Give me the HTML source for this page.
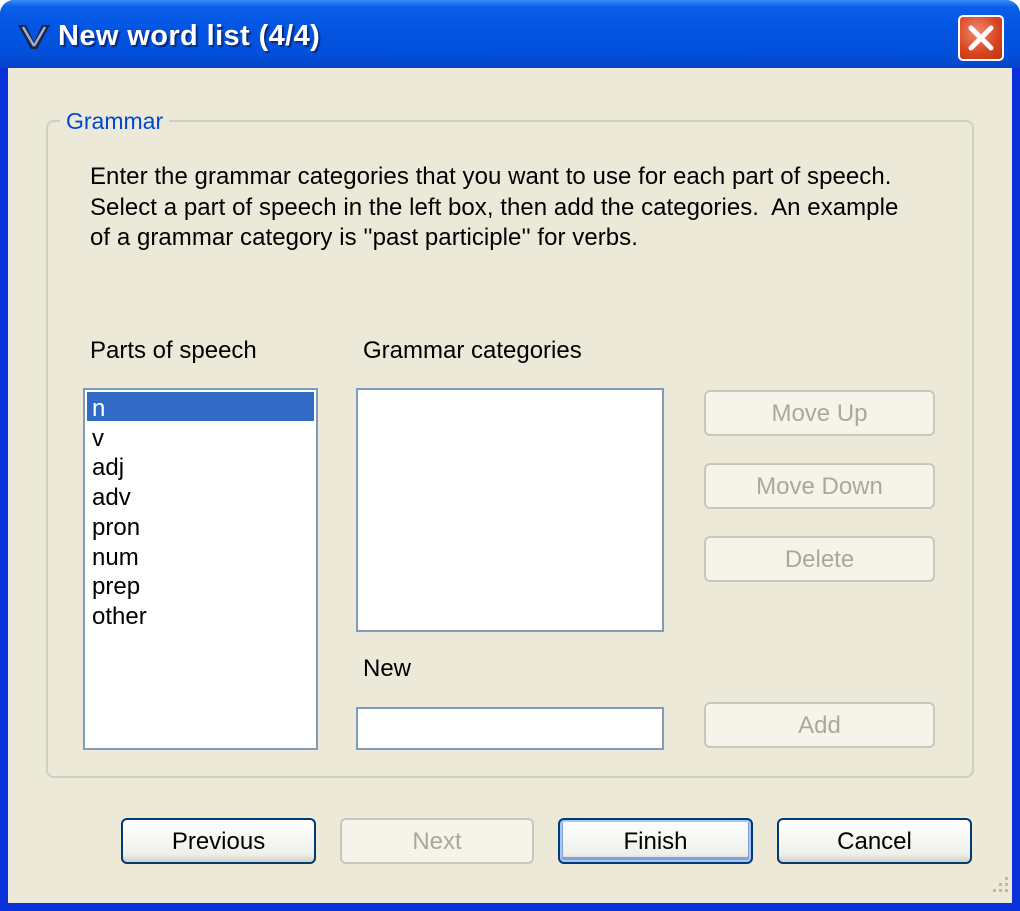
<!DOCTYPE html>
<html><head><style>
*{margin:0;padding:0;box-sizing:border-box}
body{width:1020px;height:911px;overflow:hidden;background:#fff;font-family:"Liberation Sans",sans-serif;font-size:24px;color:#000}
.win{position:absolute;left:0;top:0;width:1020px;height:911px;background:#0831D9;border-radius:14px 14px 0 0;overflow:hidden}
.title{position:absolute;left:0;top:0;width:1020px;height:68px;background:linear-gradient(#3A8CF8 0%,#0A5FE8 10%,#0355E3 40%,#0250DA 80%,#0344C8 100%)}
.ttext{position:absolute;left:58px;top:20px;color:#fff;font-weight:bold;font-size:29px;letter-spacing:0.4px;text-shadow:2px 2px 1px #0A2A80}
.close{position:absolute;left:958px;top:15px;width:46px;height:46px;border:2px solid #fff;border-radius:5px;background:radial-gradient(circle at 40% 35%,#EF8A6E,#D8431E 60%,#C03310)}
.client{position:absolute;left:8px;top:68px;width:1004px;height:835px;background:#ECE9D8}
.a{position:absolute}
.grp{position:absolute;left:46px;top:120px;width:928px;height:658px;border:2px solid #D0D0BF;border-radius:8px}
.lbl{position:absolute;white-space:nowrap}
.box{position:absolute;background:#fff;border:2px solid #7F9DB9}
.btn{position:absolute;border:2px solid #003C74;border-radius:6px;background:linear-gradient(#FFFFFF,#F0F0EA 80%,#D6D0C5);text-align:center;line-height:44px}
.dis{position:absolute;border:2px solid #C9C7BA;border-radius:6px;background:#F5F4EA;color:#ACA899;text-align:center;line-height:44px}
</style></head><body>
<div class="win">
<div class="title">
<svg class="a" style="left:18px;top:24px" width="32" height="26" viewBox="0 0 32 26"><path d="M0 1h8l8 17 8-17h8L19 25h-6z" fill="#1c2540"/><path d="M5 3l11 19M27 3L16 22" stroke="#9fb0d0" stroke-width="2.5" fill="none"/></svg>
<div class="ttext">New word list (4/4)</div>
<div class="close"><svg width="42" height="42" viewBox="0 0 42 42"><path d="M11 11L31 31M31 11L11 31" stroke="#fff" stroke-width="5" stroke-linecap="round"/></svg></div>
</div>
<div class="client"></div>
<div class="grp"></div>
<div class="lbl" style="left:60px;top:108px;background:#ECE9D8;padding:0 6px;color:#0046D5;font-size:23px">Grammar</div>
<div class="lbl" style="left:90px;top:162px;line-height:30.5px;letter-spacing:0.05px">Enter the grammar categories that you want to use for each part of speech.<br>Select a part of speech in the left box, then add the categories.&nbsp; An example<br>of a grammar category is ''past participle'' for verbs.</div>
<div class="lbl" style="left:90px;top:337px">Parts of speech</div>
<div class="lbl" style="left:363px;top:337px">Grammar categories</div>
<div class="box" style="left:83px;top:388px;width:235px;height:362px"></div>
<div class="a" style="left:87px;top:392px;width:227px;height:29px;background:#316AC5"></div>
<div class="lbl" style="left:92px;top:394px;line-height:29.7px">
<span style="color:#fff">n</span><br>v<br>adj<br>adv<br>pron<br>num<br>prep<br>other</div>
<div class="box" style="left:356px;top:388px;width:308px;height:244px"></div>
<div class="lbl" style="left:363px;top:655px">New</div>
<div class="box" style="left:356px;top:707px;width:308px;height:43px"></div>
<div class="dis" style="left:704px;top:390px;width:231px;height:46px">Move Up</div>
<div class="dis" style="left:704px;top:463px;width:231px;height:46px">Move Down</div>
<div class="dis" style="left:704px;top:536px;width:231px;height:46px">Delete</div>
<div class="dis" style="left:704px;top:702px;width:231px;height:46px">Add</div>
<div class="btn" style="left:121px;top:818px;width:195px;height:46px">Previous</div>
<div class="dis" style="left:340px;top:818px;width:194px;height:46px">Next</div>
<div class="btn" style="left:558px;top:818px;width:195px;height:46px;box-shadow:inset 0 0 0 2px #A8C6F2,inset 0 -2px 0 3px #7DA2E8">Finish</div>
<div class="btn" style="left:777px;top:818px;width:195px;height:46px">Cancel</div>
<svg class="a" style="left:988px;top:876px" width="22" height="22"><g fill="#BDB9A8"><rect x="17" y="1" width="3" height="3"/><rect x="11" y="7" width="3" height="3"/><rect x="17" y="7" width="3" height="3"/><rect x="5" y="13" width="3" height="3"/><rect x="11" y="13" width="3" height="3"/><rect x="17" y="13" width="3" height="3"/></g></svg>
</div>
</body></html>
